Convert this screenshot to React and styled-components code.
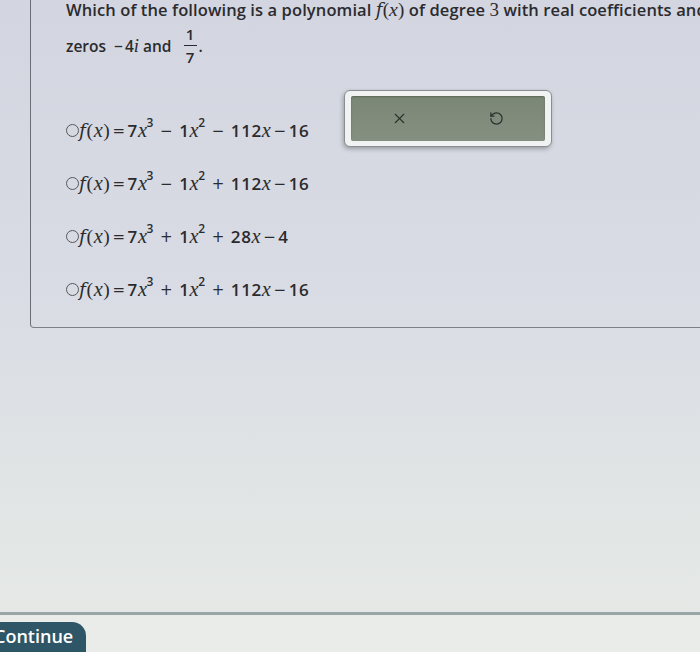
import React from "react";
import styled, { createGlobalStyle } from "styled-components";
import { X, RotateCcw } from "lucide-react";

const GlobalStyle = createGlobalStyle`
  html, body {
    margin: 0;
    padding: 0;
  }
  body {
    font-family: "Open Sans", "Liberation Sans", sans-serif;
  }
`;

const options = [
  { c2: "−", s1: "−", b: "112", s2: "−", d: "16" },
  { c2: "−", s1: "+", b: "112", s2: "−", d: "16" },
  { c2: "+", s1: "+", b: "28", s2: "−", d: "4" },
  { c2: "+", s1: "+", b: "112", s2: "−", d: "16" },
];

const Fx = () => (
  <>
    <MathF>f</MathF>
    <Paren>(</Paren>
    <MathX>x</MathX>
    <Paren>)</Paren>
  </>
);

const Option = ({ o }) => (
  <OptionRow>
    <Radio />
    <Expr>
      <Fx />
      <Op>=</Op>7<MathX>x</MathX>
      <Sup>3</Sup>
      <Op $wide>{o.c2}</Op>1<MathX>x</MathX>
      <Sup>2</Sup>
      <Op $wide>{o.s1}</Op>
      {o.b}
      <MathX>x</MathX>
      <Op>{o.s2}</Op>
      {o.d}
    </Expr>
  </OptionRow>
);

const App = () => {
  return (
    <Page>
      <GlobalStyle />
      <Panel>
        <Question>
          Which of the following is a polynomial <MathF>f</MathF>
          <Paren>(</Paren>
          <MathX>x</MathX>
          <Paren>)</Paren> of degree <Num>3</Num> with real coefficients and
        </Question>
        <QuestionLine>
          zeros <Minus>−</Minus>4<MathX>i</MathX> and
          <Fraction>
            <span>1</span>
            <Bar />
            <span>7</span>
          </Fraction>
          .
        </QuestionLine>

        <Body>
          <Options>
            {options.map((o, i) => (
              <Option key={i} o={o} />
            ))}
          </Options>
          <ToolBox>
            <ToolInner>
              <ToolBtn>
                <X size={17} strokeWidth={1.6} />
              </ToolBtn>
              <ToolBtn>
                <RotateCcw size={15} strokeWidth={2} />
              </ToolBtn>
            </ToolInner>
          </ToolBox>
        </Body>
      </Panel>

      <Footer>
        <ContinueBtn>Continue</ContinueBtn>
      </Footer>
    </Page>
  );
};

export default App;

const Page = styled.div`
  width: 700px;
  height: 652px;
  overflow: hidden;
  display: flex;
  flex-direction: column;
  background: linear-gradient(180deg, #d3d5e0 0%, #d9dce4 45%, #e2e6e5 80%, #e6e9e6 100%);
  color: #2b2b2e;
`;

const Panel = styled.section`
  margin-left: 30px;
  height: 328px;
  box-sizing: border-box;
  border-left: 1px solid #6b6d74;
  border-bottom: 1.5px solid #7d8088;
  border-bottom-left-radius: 4px;
  padding-left: 35px;
  display: flex;
  flex-direction: column;
`;

const Question = styled.div`
  font-size: 16.5px;
  font-weight: 600;
  letter-spacing: 0.1px;
  white-space: nowrap;
  line-height: 18px;
`;

const QuestionLine = styled.div`
  display: flex;
  align-items: center;
  font-size: 15.5px;
  font-weight: 600;
  margin-top: 6px;
  white-space: pre;
`;

const Minus = styled.span`
  margin: 0 2px 0 4px;
`;

const MathF = styled.span`
  font-family: "DejaVu Serif", "Liberation Serif", serif;
  font-style: italic;
  font-weight: 400;
  font-size: 1.1em;
`;

const MathX = styled.span`
  font-family: "Liberation Serif", serif;
  font-style: italic;
  font-weight: 400;
  font-size: 1.2em;
`;

const Paren = styled.span`
  font-family: "Liberation Serif", serif;
  font-weight: 400;
  font-size: 1.15em;
`;

const Num = styled.span`
  font-family: "Liberation Serif", serif;
  font-weight: 400;
  font-size: 1.15em;
`;

const Fraction = styled.span`
  display: inline-flex;
  flex-direction: column;
  align-items: center;
  margin: 0 2px 0 12px;
  font-size: 15px;
  line-height: 18px;
`;

const Bar = styled.span`
  width: 13px;
  height: 1px;
  background: #2b2b2e;
  margin: 2px 0;
`;

const Body = styled.div`
  display: flex;
  align-items: flex-start;
  margin-top: 24px;
`;

const Options = styled.div`
  display: flex;
  flex-direction: column;
  gap: 31px;
  margin-top: 28px;
  width: 250px;
`;

const OptionRow = styled.label`
  display: flex;
  align-items: center;
  height: 22px;
`;

const Radio = styled.span`
  width: 11px;
  height: 11px;
  border: 1.5px solid #55575c;
  border-radius: 50%;
  margin-top: 2px;
  flex: none;
`;

const Expr = styled.span`
  font-family: "Open Sans", "Liberation Sans", sans-serif;
  font-size: 17px;
  font-weight: 600;
  letter-spacing: 0.6px;
  white-space: nowrap;
  color: #2b2b2e;
`;

const Op = styled.span`
  font-family: "DejaVu Sans", "Liberation Sans", sans-serif;
  font-weight: 400;
  font-size: 15px;
  margin: 0 ${(p) => (p.$wide ? "6px" : "2px")};
`;

const Sup = styled.sup`
  font-size: 12px;
  position: relative;
  top: -3px;
  margin-left: -1px;
`;

const ToolBox = styled.div`
  margin-left: 28px;
  width: 208px;
  height: 57px;
  box-sizing: border-box;
  padding: 5px 6px 5px 6px;
  background: #f1f2f2;
  border: 1px solid #8a8d92;
  border-radius: 6px;
  box-shadow: -1px 2px 4px rgba(40, 50, 40, 0.35);
`;

const ToolInner = styled.div`
  height: 100%;
  display: flex;
  align-items: center;
  justify-content: space-around;
  background: linear-gradient(180deg, #7a8676 0%, #869082 100%);
  border-radius: 2px;
  box-shadow: inset 0 1px 2px rgba(0, 0, 0, 0.25);
`;

const ToolBtn = styled.span`
  display: flex;
  align-items: center;
  justify-content: center;
  color: #2c302e;
  width: 40px;
`;

const Footer = styled.footer`
  margin-top: auto;
  height: 37px;
  border-top: 3px solid #9aa6a6;
  background: #e9ece8;
  display: flex;
  align-items: flex-end;
`;

const ContinueBtn = styled.button`
  margin-left: -6px;
  height: 30px;
  width: 92px;
  border: none;
  border-top-right-radius: 14px;
  background: #2e5667;
  color: #fff;
  font-family: "Open Sans", "Liberation Sans", sans-serif;
  font-size: 18px;
  font-weight: 600;
  padding: 0 0 2px 0;
  text-align: left;
`;
